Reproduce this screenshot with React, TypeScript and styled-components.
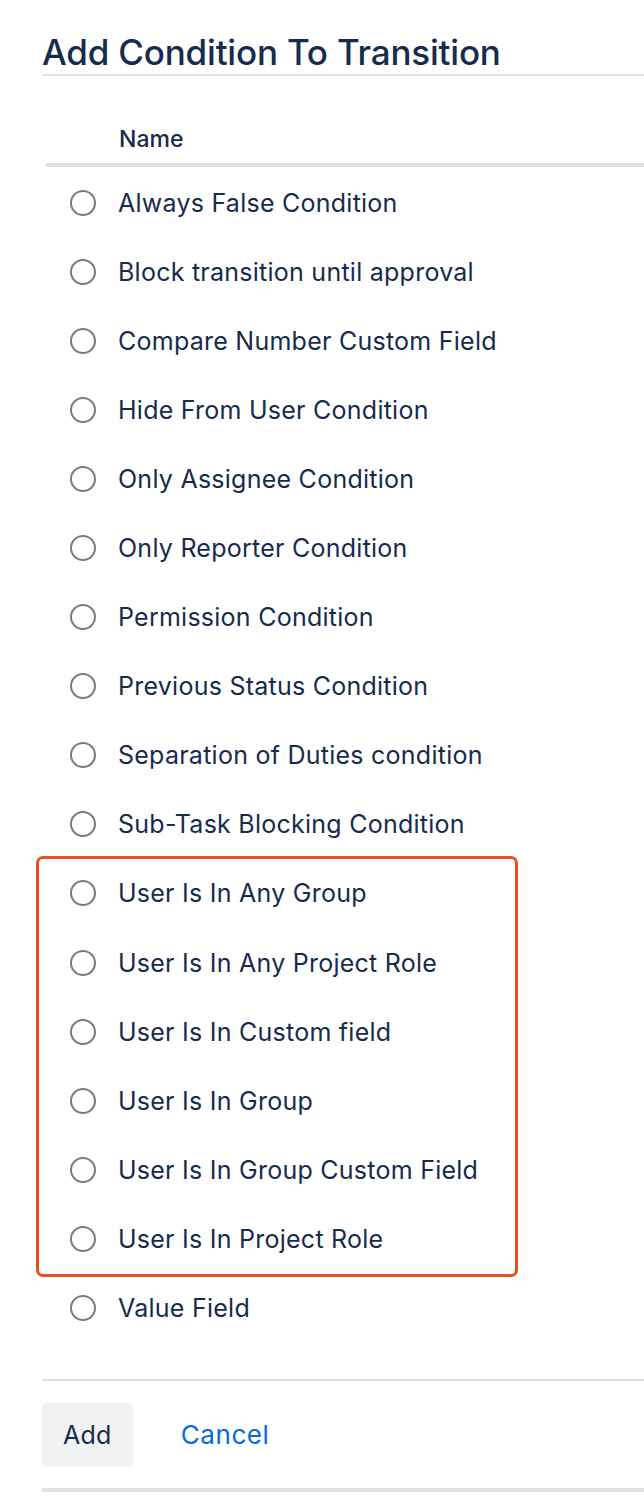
import React from 'react';
import styled, { createGlobalStyle } from 'styled-components';

const GlobalStyle = createGlobalStyle`
  html, body {
    margin: 0;
    padding: 0;
    background: #ffffff;
  }
  body {
    font-family: Inter, "Liberation Sans", sans-serif;
    color: #172b4d;
  }
`;

const Page = styled.div`
  width: 644px;
  padding: 0 0 0 42px;
  box-sizing: border-box;
  overflow: hidden;
`;

const Title = styled.h1`
  margin: 0;
  padding-top: 30px;
  height: 44px;
  font-size: 35px;
  font-weight: 500;
  letter-spacing: -0.2px;
  line-height: 44px;
  color: #172b4d;
  border-bottom: 2px solid #dfe1e6;
`;

const TableHead = styled.div`
  margin-left: 4px;
  height: 91px;
  display: flex;
  align-items: flex-end;
  padding-left: 73px;
  padding-bottom: 11px;
  box-sizing: border-box;
  border-bottom: 4px solid #dfe1e6;
  font-size: 23px;
  font-weight: 500;
  line-height: 26px;
`;

const List = styled.div`
  display: flex;
  flex-direction: column;
  padding-top: 1px;
`;

const Group = styled.div`
  margin: -3px 0 -3px -6px;
  width: 482px;
  box-sizing: border-box;
  border: 3px solid #f04a23;
  border-radius: 7px;
  padding-left: 3px;
`;

const Row = styled.label`
  height: 69.1px;
  display: flex;
  align-items: center;
  gap: 22px;
  padding-left: 28px;
  font-size: 25px;
  letter-spacing: 0.25px;
  line-height: 30px;
  color: #172b4d;
`;

const Radio = styled.span`
  width: 26px;
  height: 26px;
  box-sizing: border-box;
  border: 2px solid #7b7b7b;
  border-radius: 50%;
  flex: none;
  background: #fff;
`;

const Footer = styled.div`
  margin-top: 36px;
  border-top: 2px solid #dfe1e6;
  border-bottom: 4px solid #dfe1e6;
  padding: 22px 0 21px;
  display: flex;
  align-items: center;
  gap: 48px;
`;

const Button = styled.button<{ $link?: boolean }>`
  height: 64px;
  padding: 0 ${({ $link }) => ($link ? '0' : '21px')};
  border: none;
  border-radius: 5px;
  background: ${({ $link }) => ($link ? 'transparent' : '#f1f2f4')};
  color: ${({ $link }) => ($link ? '#0c66e4' : '#172b4d')};
  font-family: Inter, "Liberation Sans", sans-serif;
  font-size: ${({ $link }) => ($link ? '26px' : '25px')};
  letter-spacing: ${({ $link }) => ($link ? '0.6px' : '0.25px')};
  font-weight: 400;
`;

const before = [
  'Always False Condition',
  'Block transition until approval',
  'Compare Number Custom Field',
  'Hide From User Condition',
  'Only Assignee Condition',
  'Only Reporter Condition',
  'Permission Condition',
  'Previous Status Condition',
  'Separation of Duties condition',
  'Sub-Task Blocking Condition',
];

const highlighted = [
  'User Is In Any Group',
  'User Is In Any Project Role',
  'User Is In Custom field',
  'User Is In Group',
  'User Is In Group Custom Field',
  'User Is In Project Role',
];

const after = ['Value Field'];

const Item = ({ name }: { name: string }) => (
  <Row>
    <Radio />
    {name}
  </Row>
);

export default function App() {
  return (
    <Page>
      <GlobalStyle />
      <Title>Add Condition To Transition</Title>
      <TableHead>Name</TableHead>
      <List>
        {before.map((n) => <Item key={n} name={n} />)}
        <Group>
          {highlighted.map((n) => <Item key={n} name={n} />)}
        </Group>
        {after.map((n) => <Item key={n} name={n} />)}
      </List>
      <Footer>
        <Button>Add</Button>
        <Button $link>Cancel</Button>
      </Footer>
    </Page>
  );
}
